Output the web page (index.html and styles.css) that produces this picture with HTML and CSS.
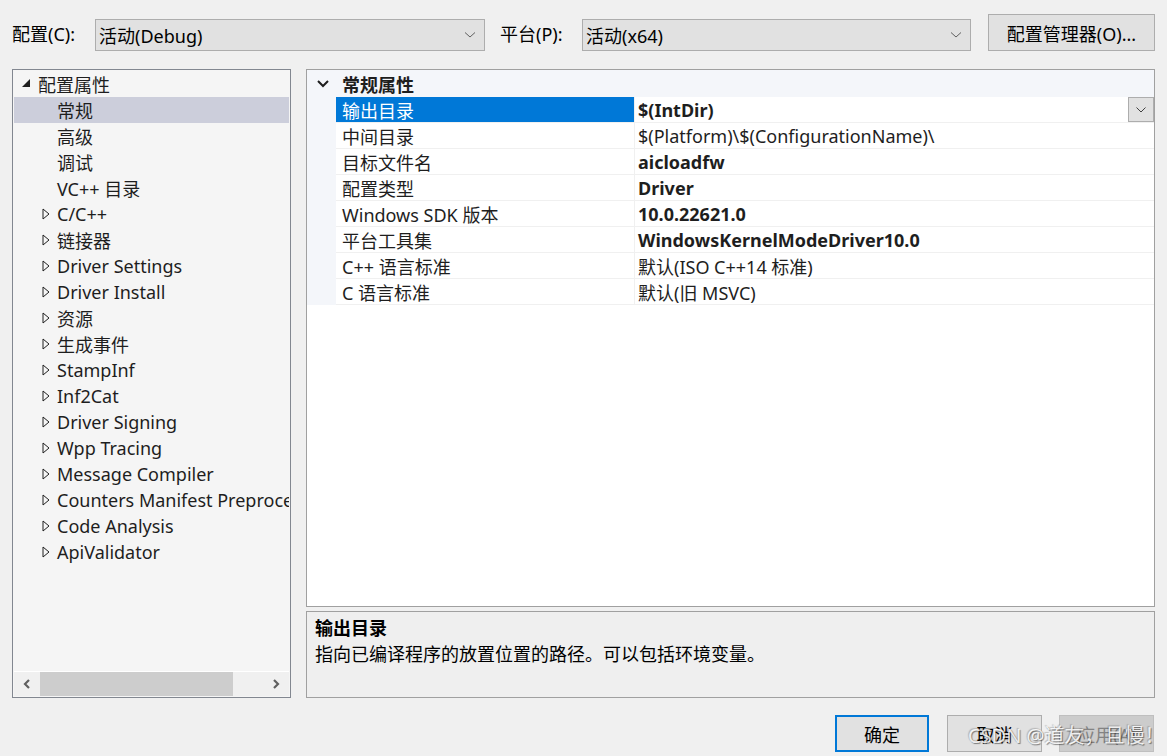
FILE: index.html
```html
<!DOCTYPE html>
<html lang="zh-CN">
<head>
  <meta charset="UTF-8">
  <title>属性页</title>
  <link rel="stylesheet" href="styles.css">
</head>
<body>
  <div class="dialog">

    <!-- Configuration / platform selectors -->
    <div class="topbar">
      <span class="top-label">配置(C):</span>
      <div class="combo combo-config">
        <span>活动(Debug)</span>
        <svg class="combo-arrow" width="12" height="8" viewBox="0 0 12 8"><path d="M1 1.5 L6 6 L11 1.5" fill="none" stroke="#606060" stroke-width="1"/></svg>
      </div>
      <span class="top-label label-platform">平台(P):</span>
      <div class="combo combo-platform">
        <span>活动(x64)</span>
        <svg class="combo-arrow" width="12" height="8" viewBox="0 0 12 8"><path d="M1 1.5 L6 6 L11 1.5" fill="none" stroke="#606060" stroke-width="1"/></svg>
      </div>
      <button class="btn btn-manager">配置管理器(O)...</button>
    </div>

    <div class="main">
      <!-- Left: category tree -->
      <div class="tree-panel">
        <ul class="tree">
          <li class="tree-row root">
            <svg class="exp" width="10" height="10" viewBox="0 0 10 10"><path d="M9 1 L9 9 L1 9 Z" fill="#1e1e1e"/></svg>
            <span>配置属性</span>
          </li>
          <li class="tree-row leaf selected"><span>常规</span></li>
          <li class="tree-row leaf"><span>高级</span></li>
          <li class="tree-row leaf"><span>调试</span></li>
          <li class="tree-row leaf"><span>VC++ 目录</span></li>
          <li class="tree-row node"><svg class="col" width="8" height="12" viewBox="0 0 8 12"><path d="M1 1 L7 6 L1 11 Z" fill="none" stroke="#1e1e1e" stroke-width="1"/></svg><span>C/C++</span></li>
          <li class="tree-row node"><svg class="col" width="8" height="12" viewBox="0 0 8 12"><path d="M1 1 L7 6 L1 11 Z" fill="none" stroke="#1e1e1e" stroke-width="1"/></svg><span>链接器</span></li>
          <li class="tree-row node"><svg class="col" width="8" height="12" viewBox="0 0 8 12"><path d="M1 1 L7 6 L1 11 Z" fill="none" stroke="#1e1e1e" stroke-width="1"/></svg><span>Driver Settings</span></li>
          <li class="tree-row node"><svg class="col" width="8" height="12" viewBox="0 0 8 12"><path d="M1 1 L7 6 L1 11 Z" fill="none" stroke="#1e1e1e" stroke-width="1"/></svg><span>Driver Install</span></li>
          <li class="tree-row node"><svg class="col" width="8" height="12" viewBox="0 0 8 12"><path d="M1 1 L7 6 L1 11 Z" fill="none" stroke="#1e1e1e" stroke-width="1"/></svg><span>资源</span></li>
          <li class="tree-row node"><svg class="col" width="8" height="12" viewBox="0 0 8 12"><path d="M1 1 L7 6 L1 11 Z" fill="none" stroke="#1e1e1e" stroke-width="1"/></svg><span>生成事件</span></li>
          <li class="tree-row node"><svg class="col" width="8" height="12" viewBox="0 0 8 12"><path d="M1 1 L7 6 L1 11 Z" fill="none" stroke="#1e1e1e" stroke-width="1"/></svg><span>StampInf</span></li>
          <li class="tree-row node"><svg class="col" width="8" height="12" viewBox="0 0 8 12"><path d="M1 1 L7 6 L1 11 Z" fill="none" stroke="#1e1e1e" stroke-width="1"/></svg><span>Inf2Cat</span></li>
          <li class="tree-row node"><svg class="col" width="8" height="12" viewBox="0 0 8 12"><path d="M1 1 L7 6 L1 11 Z" fill="none" stroke="#1e1e1e" stroke-width="1"/></svg><span>Driver Signing</span></li>
          <li class="tree-row node"><svg class="col" width="8" height="12" viewBox="0 0 8 12"><path d="M1 1 L7 6 L1 11 Z" fill="none" stroke="#1e1e1e" stroke-width="1"/></svg><span>Wpp Tracing</span></li>
          <li class="tree-row node"><svg class="col" width="8" height="12" viewBox="0 0 8 12"><path d="M1 1 L7 6 L1 11 Z" fill="none" stroke="#1e1e1e" stroke-width="1"/></svg><span>Message Compiler</span></li>
          <li class="tree-row node"><svg class="col" width="8" height="12" viewBox="0 0 8 12"><path d="M1 1 L7 6 L1 11 Z" fill="none" stroke="#1e1e1e" stroke-width="1"/></svg><span>Counters Manifest Preprocessor</span></li>
          <li class="tree-row node"><svg class="col" width="8" height="12" viewBox="0 0 8 12"><path d="M1 1 L7 6 L1 11 Z" fill="none" stroke="#1e1e1e" stroke-width="1"/></svg><span>Code Analysis</span></li>
          <li class="tree-row node"><svg class="col" width="8" height="12" viewBox="0 0 8 12"><path d="M1 1 L7 6 L1 11 Z" fill="none" stroke="#1e1e1e" stroke-width="1"/></svg><span>ApiValidator</span></li>
        </ul>

        <!-- horizontal scrollbar -->
        <div class="hscroll">
          <svg class="sc-arrow" width="12" height="12" viewBox="0 0 12 12"><path d="M8 2 L4 6 L8 10" fill="none" stroke="#606060" stroke-width="2.2"/></svg>
          <div class="sc-track"><div class="sc-thumb"></div></div>
          <svg class="sc-arrow" width="12" height="12" viewBox="0 0 12 12"><path d="M4 2 L8 6 L4 10" fill="none" stroke="#606060" stroke-width="2.2"/></svg>
        </div>
      </div>

      <!-- Right: property grid and description -->
      <div class="right">
        <div class="grid-panel">
          <div class="grid-head">
            <svg class="head-chev" width="14" height="10" viewBox="0 0 14 10"><path d="M2 2 L7 7 L12 2" fill="none" stroke="#1e1e1e" stroke-width="2"/></svg>
            <span>常规属性</span>
          </div>
          <div class="grid-body">
            <div class="prop selected">
              <div class="prop-name">输出目录</div>
              <div class="prop-value bold">$(IntDir)
                <span class="drop-btn"><svg width="12" height="8" viewBox="0 0 12 8"><path d="M1.5 1.5 L6 6 L10.5 1.5" fill="none" stroke="#404040" stroke-width="1"/></svg></span>
              </div>
            </div>
            <div class="prop">
              <div class="prop-name">中间目录</div>
              <div class="prop-value">$(Platform)\$(ConfigurationName)\</div>
            </div>
            <div class="prop">
              <div class="prop-name">目标文件名</div>
              <div class="prop-value bold">aicloadfw</div>
            </div>
            <div class="prop">
              <div class="prop-name">配置类型</div>
              <div class="prop-value bold">Driver</div>
            </div>
            <div class="prop">
              <div class="prop-name">Windows SDK 版本</div>
              <div class="prop-value bold">10.0.22621.0</div>
            </div>
            <div class="prop">
              <div class="prop-name">平台工具集</div>
              <div class="prop-value bold">WindowsKernelModeDriver10.0</div>
            </div>
            <div class="prop">
              <div class="prop-name">C++ 语言标准</div>
              <div class="prop-value">默认(ISO C++14 标准)</div>
            </div>
            <div class="prop">
              <div class="prop-name">C 语言标准</div>
              <div class="prop-value">默认(旧 MSVC)</div>
            </div>
          </div>
        </div>

        <div class="desc">
          <div class="desc-title">输出目录</div>
          <div class="desc-text">指向已编译程序的放置位置的路径。可以包括环境变量。</div>
        </div>
      </div>
    </div>

    <!-- Dialog buttons -->
    <div class="footer">
      <button class="btn btn-ok">确定</button>
      <button class="btn btn-cancel">取消</button>
      <button class="btn btn-apply" disabled>应用(A)</button>
      <span class="watermark">CSDN @道友，且慢！</span>
    </div>
  </div>
</body>
</html>
```

FILE: styles.css
```css
/* Property pages dialog */
body {
  margin: 0;
  background-color: #f0f0f0;
  font-family: "Noto Sans", "Noto Sans CJK SC", sans-serif;
  font-size: 18px;
  color: #1e1e1e;
}

.dialog {
  width: 1167px;
  height: 756px;
  display: flex;
  flex-direction: column;
  overflow: hidden;
}

/* Top selectors */
.topbar {
  display: flex;
  align-items: center;
  height: 37px;
  margin-top: 14px;
  padding-left: 12px;
}

.top-label {
  width: 83px;
  color: #000;
}

.label-platform {
  width: 82px;
  margin-left: 15px;
}

.combo {
  box-sizing: border-box;
  height: 32px;
  margin-top: 4px;
  border: 1px solid #adadad;
  background-color: #e1e1e1;
  display: flex;
  align-items: center;
  justify-content: space-between;
  padding: 0 8px 0 3px;
  color: #000;
}

.combo-config {
  width: 390px;
}

.combo-platform {
  width: 389px;
}

.btn {
  box-sizing: border-box;
  font-family: inherit;
  font-size: 18px;
  color: #000;
  background-color: #e1e1e1;
  border: 1px solid #adadad;
  padding: 0;
}

.btn-manager {
  width: 167px;
  height: 37px;
  margin-left: 17px;
}

/* Main area */
.main {
  display: flex;
  margin-top: 18px;
  padding-left: 12px;
  height: 629px;
}

.tree-panel {
  box-sizing: border-box;
  width: 279px;
  height: 629px;
  border: 1px solid #828790;
  background-color: #f5f5f5;
  display: flex;
  flex-direction: column;
  padding: 1px;
}

.tree {
  list-style: none;
  margin: 0;
  padding: 0;
  flex: 1;
  overflow: hidden;
}

.tree-row {
  height: 26px;
  display: flex;
  align-items: center;
  white-space: nowrap;
  overflow: hidden;
}

.tree-row svg {
  flex: none;
}

.tree-row.root {
  padding-left: 7px;
}

.tree-row.root .exp {
  margin-right: 7px;
  margin-top: -2px;
}

.tree-row.leaf {
  padding-left: 43px;
}

.tree-row.node {
  padding-left: 28px;
}

.tree-row.node .col {
  margin-right: 7px;
}

.tree-row.selected {
  background-color: #cccedb;
}

/* Horizontal scrollbar */
.hscroll {
  height: 24px;
  border-top: 1px solid #ffffff;
  background-color: #f0f0f0;
  display: flex;
  align-items: center;
}

.sc-arrow {
  width: 26px;
  flex: none;
}

.sc-track {
  flex: 1;
  height: 100%;
  display: flex;
}

.sc-thumb {
  width: 193px;
  height: 100%;
  background-color: #cdcdcd;
}

/* Right side */
.right {
  margin-left: 15px;
  width: 849px;
  display: flex;
  flex-direction: column;
}

.grid-panel {
  box-sizing: border-box;
  height: 538px;
  border: 1px solid #a0a0a0;
  background-color: #ffffff;
}

.grid-head {
  height: 27px;
  background-color: #f4f6fa;
  display: flex;
  align-items: center;
  font-weight: bold;
  color: #1e1e1e;
}

.head-chev {
  margin-left: 9px;
  margin-right: 12px;
}

.grid-body {
  border-left: 29px solid #f4f6fa;
}

.prop {
  display: flex;
  height: 26px;
  box-sizing: border-box;
  border-bottom: 1px solid #f0f0f0;
}

.prop-name {
  width: 299px;
  box-sizing: border-box;
  padding-left: 6px;
  border-right: 1px solid #f0f0f0;
  display: flex;
  align-items: center;
  white-space: nowrap;
}

.prop-value {
  flex: 1;
  padding-left: 3px;
  display: flex;
  align-items: center;
  white-space: nowrap;
  position: relative;
}

.prop-value.bold {
  font-weight: bold;
}

.prop.selected .prop-name {
  background-color: #0078d7;
  color: #ffffff;
}

.drop-btn {
  position: absolute;
  right: 0;
  top: 0;
  box-sizing: border-box;
  width: 26px;
  height: 25px;
  background-color: #e1e1e1;
  border: 1px solid #adadad;
  display: flex;
  align-items: center;
  justify-content: center;
}

/* Description box */
.desc {
  box-sizing: border-box;
  margin-top: 4px;
  height: 87px;
  border: 1px solid #a0a0a0;
  background-color: #efefef;
  padding: 3px 8px;
  color: #000;
}

.desc-title {
  font-weight: bold;
  line-height: 26px;
}

.desc-text {
  line-height: 26px;
}

/* Footer buttons */
.footer {
  display: flex;
  margin-top: 17px;
  padding-left: 835px;
  position: relative;
}

.btn-ok,
.btn-cancel,
.btn-apply {
  height: 37px;
  width: 95px;
}

.btn-ok {
  width: 94px;
  border: 2px solid #0078d7;
}

.btn-cancel {
  margin-left: 18px;
}

.btn-apply {
  margin-left: 17px;
  background-color: #cccccc;
  border-color: #bfbfbf;
  color: #838383;
}

/* site stamp laid over the buttons */
.watermark {
  position: absolute;
  left: 968px;
  top: 5px;
  font-size: 20px;
  color: rgba(255, 255, 255, 0.85);
  text-shadow: 1px 1px 1px rgba(0, 0, 0, 0.45), -1px -1px 1px rgba(0, 0, 0, 0.2);
  white-space: nowrap;
}
```
